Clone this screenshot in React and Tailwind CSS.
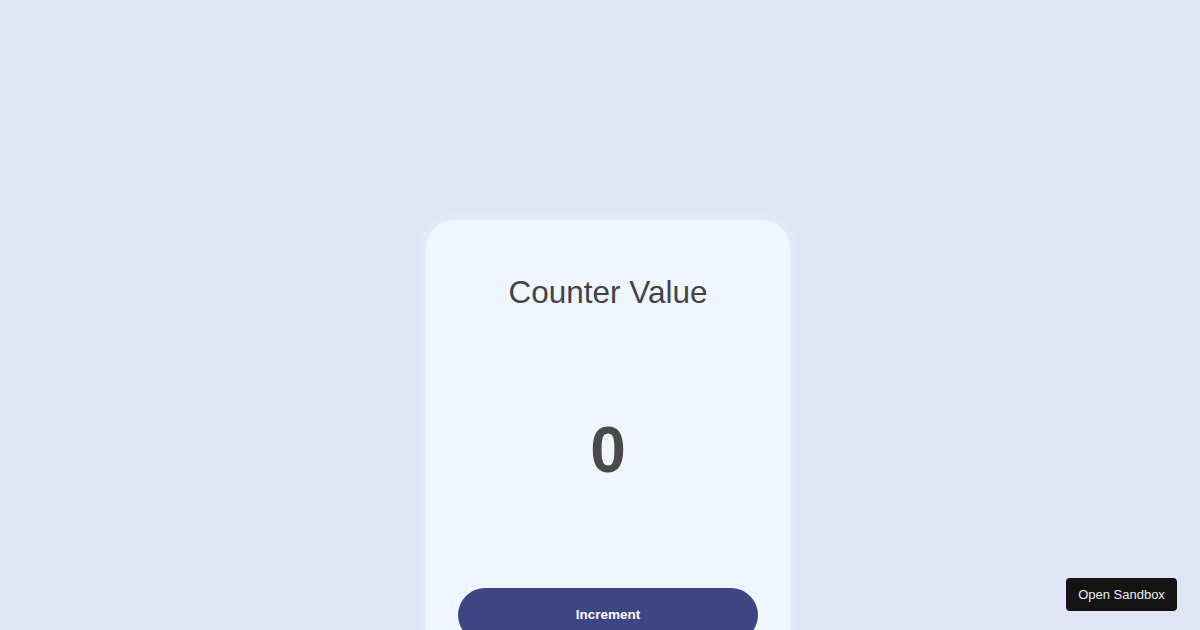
export default function App() {
  return (
    <div className="relative w-full min-h-[630px] h-[630px] overflow-hidden bg-[#dfe5f4]" style={{ fontFamily: '"Liberation Sans", Arial, sans-serif' }}>
      <div className="flex justify-center pt-[220px] pl-4">
        <div className="w-[364px] rounded-[28px] bg-[#f0f6ff] px-8 pt-[54px] pb-8 flex flex-col items-center shadow-[0_0_16px_4px_rgba(232,238,252,0.8)]">
          <h1 className="text-[31.5px] leading-[37px] text-[#444444] font-normal">Counter Value</h1>
          <div className="mt-[103px] text-[64px] leading-[72px] font-bold text-[#4a4a4a]">0</div>
          <button className="mt-[102px] w-[300px] h-[54px] rounded-full bg-[#3d4583] text-white text-[13.5px] font-bold">Increment</button>
        </div>
      </div>
      <div className="absolute left-[1066px] top-[578px] w-[111px] h-[33px] rounded-[4px] bg-[#131313] text-[#f0f0f0] text-[13px] flex items-center justify-center">Open Sandbox</div>
    </div>
  );
}
